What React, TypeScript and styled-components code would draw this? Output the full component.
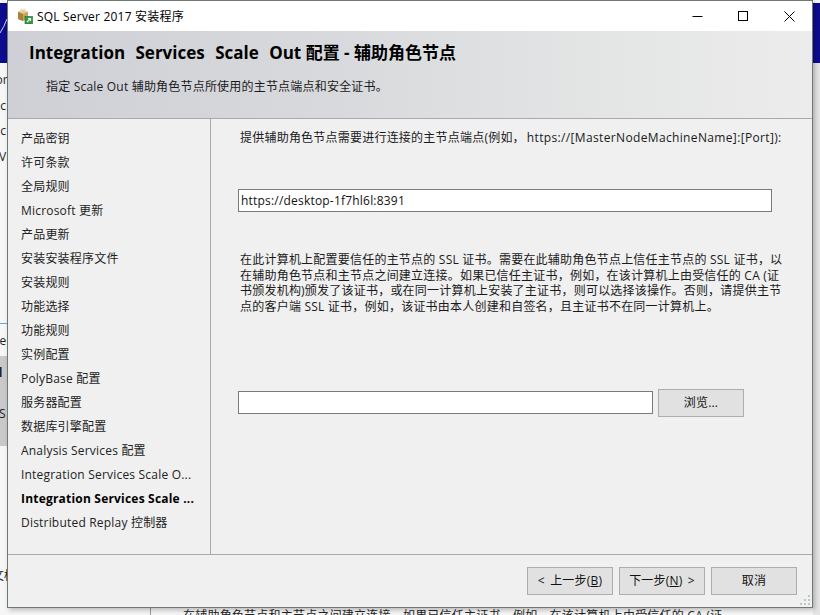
import React from "react";
import styled, { createGlobalStyle } from "styled-components";

const Global = createGlobalStyle`
  html, body { margin: 0; padding: 0; width: 820px; height: 615px; overflow: hidden; background: #e4e4e4; }
  * { box-sizing: border-box; }
  body { font-family: "Open Sans", "Noto Sans CJK SC", sans-serif; font-size: 12px; color: #1a1a1a; }
`;

const Desktop = styled.div`
  position: relative; width: 820px; height: 615px; overflow: hidden; background: #f6f6f6;
`;
const BlueLeft = styled.svg`
  position: absolute; left: 0; top: 3px; width: 7px; height: 60px; background: #0d0d8f;
`;
const BlueRight = styled.div`
  position: absolute; left: 813px; top: 3px; width: 7px; height: 60px; background: #0d0d8f;
`;
const RightBack = styled.div`
  position: absolute; left: 813px; top: 63px; width: 7px; height: 552px; background: #e6e6e6;
`;
const GreyBand = styled.div`
  position: absolute; left: 0; top: 356px; width: 7px; height: 90px; background: #c9c9cb;
`;
const BlueRule = styled.div`
  position: absolute; left: 0; top: 323px; width: 7px; height: 1px; background: #6fa8c8;
`;
const BackText = styled.div<{ $top: number; $left: number; $bold?: boolean }>`
  position: absolute; left: ${(p) => p.$left}px; top: ${(p) => p.$top}px; font-size: 12px; color: #222; white-space: nowrap;
  font-weight: ${(p) => (p.$bold ? 700 : 400)};
`;
const BackPanelEdge = styled.div`
  position: absolute; left: 150px; top: 607px; width: 1px; height: 8px; background: #9a9a9a;
`;
const BackBottom = styled.div`
  position: absolute; left: 183px; top: 606px; font-size: 12px; color: #222; white-space: nowrap; letter-spacing: 0.22px;
`;

const Window = styled.div`
  position: absolute; left: 7px; top: 0; width: 806px; height: 608px;
  background: #f0f0f0; border: 1px solid #6d7a70;
  box-shadow: 2px 2px 5px rgba(0,0,0,0.25);
  display: flex; flex-direction: column;
`;
const TitleBar = styled.div`
  height: 30px; flex: none; background: #fff; display: flex; align-items: center; padding-left: 9px;
`;
const TitleText = styled.div`
  margin-left: 4px; font-size: 12px; color: #000; letter-spacing: 0.2px; flex: 1; white-space: nowrap;
`;
const Controls = styled.div`
  display: flex; height: 30px;
`;
const Control = styled.div`
  width: 46px; height: 30px; display: flex; align-items: center; justify-content: center;
`;
const Header = styled.div`
  height: 88px; flex: none; border-bottom: 1px solid #a9a9b3;
  background: linear-gradient(90deg, #cfd0d6 0%, #d8d9dc 40%, #e4e5e5 75%, #ececec 100%);
  padding: 10px 0 0 21px;
`;
const HeaderTitle = styled.div`
  font-size: 17px; font-weight: 700; color: #000; line-height: 24px; white-space: nowrap;
`;
const WideWords = styled.span`
  word-spacing: 6px;
`;
const HeaderSub = styled.div`
  margin: 14px 0 0 17px; font-size: 12px; line-height: 16px; color: #1a1a1a; letter-spacing: 0.2px; white-space: nowrap;
`;
const Body = styled.div`
  flex: 1; display: flex; min-height: 0;
`;
const Nav = styled.div`
  width: 203px; flex: none; border-right: 1px solid #a9a9ab; padding: 8px 0 0 13px;
`;
const NavItem = styled.div<{ $active?: boolean }>`
  height: 24px; line-height: 24px; width: 176px; font-size: 12px; white-space: nowrap; overflow: hidden; letter-spacing: 0.2px;
  color: ${(p) => (p.$active ? "#000" : "#222")};
  font-weight: ${(p) => (p.$active ? 700 : 400)};
`;
const Main = styled.div`
  flex: 1; padding: 11px 0 0 27px; min-width: 0;
`;
const Para = styled.div`
  font-size: 12px; line-height: 15.4px; color: #1a1a1a; letter-spacing: 0.22px; white-space: nowrap; margin-left: 2px;
`;
const Latin = styled.span`
  margin-left: 2px; letter-spacing: 0.35px;
`;
const UrlInput = styled.div`
  width: 534px; height: 23px; margin-top: 44px; background: #fff; border: 1px solid #7a7a7a;
  font-size: 12px; line-height: 21px; padding-left: 2px; color: #111; letter-spacing: 0.2px;
`;
const Desc = styled(Para)`
  margin-top: 40px;
`;
const FileRow = styled.div`
  display: flex; gap: 5px; margin-top: 75px; align-items: flex-start;
`;
const FileInput = styled.div`
  width: 415px; height: 23px; background: #fff; border: 1px solid #7a7a7a; margin-top: 2px;
`;
const Btn = styled.div`
  width: 86px; height: 28px; background: #e1e1e1; border: 1px solid #adadad;
  font-size: 12px; color: #111; display: flex; align-items: center; justify-content: center; padding-bottom: 2px; white-space: pre;
  word-spacing: 2px; letter-spacing: 0.2px;
`;
const Footer = styled.div`
  height: 53px; flex: none; border-top: 1px solid #a9a9ab; display: flex; justify-content: flex-end; gap: 6px; padding: 12px 15px 0 0; position: relative;
`;
const Key = styled.span`text-decoration: underline;`;
const Grip = styled.svg`
  position: absolute; right: 1px; bottom: 1px;
`;

const nav = ["产品密钥","许可条款","全局规则","Microsoft 更新","产品更新","安装安装程序文件","安装规则","功能选择","功能规则","实例配置","PolyBase 配置","服务器配置","数据库引擎配置","Analysis Services 配置","Integration Services Scale O..."];

const BoxIcon = () => (
  <svg width="16" height="16" viewBox="0 0 16 16">
    <path d="M1 4 L6 2 L11 4 L11 11 L6 13 L1 11 Z" fill="#c9a25f" />
    <path d="M1 4 L6 6 L11 4 L6 2 Z" fill="#e5cb94" />
    <path d="M6 6 L6 13 L1 11 L1 4 Z" fill="#a9803f" />
    <path d="M3 1 L5 0.5 L6 2 L4 3 Z M9 1 L7 0.5 L6 2 L8 3 Z" fill="#efe0b8" />
    <rect x="8" y="8.5" width="7.5" height="7.5" fill="#2f9e44" stroke="#1d6b2d" strokeWidth="0.6" />
    <path d="M10 14 L13.5 10.5 M11 10.5 H13.5 V13" stroke="#fff" strokeWidth="1.1" fill="none" />
  </svg>
);

export default function App() {
  return (
    <Desktop>
      <Global />
      <BlueLeft viewBox="0 0 7 60">
        <path d="M0 30 Q4 24 7 16" stroke="#cfd6ee" fill="none" strokeWidth="1" />
      </BlueLeft>
      <BlueRight />
      <RightBack />
      <BlueRule />
      <GreyBand />
      <BackText $top={71} $left={-12}>Cor</BackText>
      <BackText $top={97} $left={-13}>Sec</BackText>
      <BackText $top={122} $left={-13}>Sec</BackText>
      <BackText $top={148} $left={-1}>VM</BackText>
      <BackText $top={332} $left={-15}>Use</BackText>
      <BackText $top={364} $left={-8} $bold>gl</BackText>
      <BackText $top={405} $left={-1}>S</BackText>
      <BackText $top={566} $left={-8}>文档</BackText>
      <BackPanelEdge />
      <BackBottom>在辅助角色节点和主节点之间建立连接。如果已信任主证书，例如，在该计算机上由受信任的 CA (证</BackBottom>
      <Window>
        <TitleBar>
          <BoxIcon />
          <TitleText>SQL Server 2017 安装程序</TitleText>
          <Controls>
            <Control>
              <svg width="11" height="11" viewBox="0 0 11 11"><path d="M0.5 5.5H10.5" stroke="#000" /></svg>
            </Control>
            <Control>
              <svg width="11" height="11" viewBox="0 0 11 11"><rect x="0.5" y="0.5" width="9" height="9" fill="none" stroke="#000" /></svg>
            </Control>
            <Control>
              <svg width="11" height="11" viewBox="0 0 11 11"><path d="M0.5 0.5L10.5 10.5M10.5 0.5L0.5 10.5" stroke="#000" /></svg>
            </Control>
          </Controls>
        </TitleBar>
        <Header>
          <HeaderTitle><WideWords>Integration Services Scale Out</WideWords> 配置 - 辅助角色节点</HeaderTitle>
          <HeaderSub>指定 Scale Out 辅助角色节点所使用的主节点端点和安全证书。</HeaderSub>
        </Header>
        <Body>
          <Nav>
            {nav.map((n) => (
              <NavItem key={n}>{n}</NavItem>
            ))}
            <NavItem $active>Integration Services Scale ...</NavItem>
            <NavItem>Distributed Replay 控制器</NavItem>
          </Nav>
          <Main>
            <Para>提供辅助角色节点需要进行连接的主节点端点(例如，<Latin>https://[MasterNodeMachineName]:[Port]):</Latin></Para>
            <UrlInput>https://desktop-1f7hl6l:8391</UrlInput>
            <Desc>
              在此计算机上配置要信任的主节点的 SSL 证书。需要在此辅助角色节点上信任主节点的 SSL 证书，以<br />
              在辅助角色节点和主节点之间建立连接。如果已信任主证书，例如，在该计算机上由受信任的 CA (证<br />
              书颁发机构)颁发了该证书，或在同一计算机上安装了主证书，则可以选择该操作。否则，请提供主节<br />
              点的客户端 SSL 证书，例如，该证书由本人创建和自签名，且主证书不在同一计算机上。
            </Desc>
            <FileRow>
              <FileInput />
              <Btn>浏览...</Btn>
            </FileRow>
          </Main>
        </Body>
        <Footer>
          <Btn>&lt; 上一步(<Key>B</Key>)</Btn>
          <Btn>下一步(<Key>N</Key>) &gt;</Btn>
          <Btn>取消</Btn>
          <Grip width="11" height="11" viewBox="0 0 11 11">
            <path d="M8 0h2v2H8zM4 4h2v2H4zM8 4h2v2H8zM0 8h2v2H0zM4 8h2v2H4zM8 8h2v2H8z" fill="#c4c4c4" />
          </Grip>
        </Footer>
      </Window>
    </Desktop>
  );
}
